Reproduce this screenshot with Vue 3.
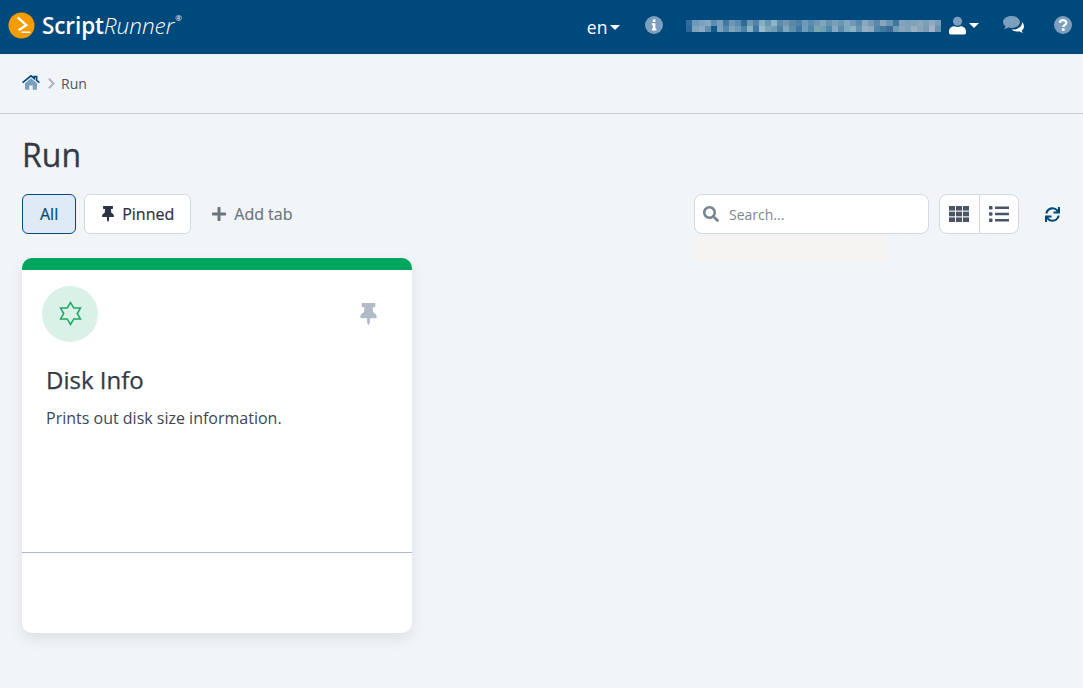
<script setup>
const pins = "M298.028 214.267L285.793 96H328c13.255 0 24-10.745 24-24V24c0-13.255-10.745-24-24-24H56C42.745 0 32 10.745 32 24v48c0 13.255 10.745 24 24 24h42.207L85.972 214.267C37.465 236.82 0 277.261 0 328c0 13.255 10.745 24 24 24h136v104.007c0 1.242.289 2.467.845 3.578l24 48c2.941 5.882 11.364 5.893 14.311 0l24-48a8.008 8.008 0 0 0 .845-3.578V352h136c13.255 0 24-10.745 24-24-.001-51.183-37.983-91.42-85.973-113.733z"
const top = ['#2f6d9c','#6f99b8','#7ea2bd','#86a7c0','#5f8db0','#7a9fbb','#3f7aa3','#6e97b6','#5a8bae','#2e6b99','#6c9ab5','#4f84a8','#86b0c2','#6a96b5','#8fb5c5','#5e8aab','#6f98b6','#5b8aa8','#4d82a8','#6f9ab7','#5c8cae','#6f99b3','#7fa5bb','#6993b1','#7aa0b8','#6c96b4','#85a7bd','#6e98b5','#5d8aac','#8aa8c0','#7799b5','#5c88aa','#8aa4bb','#6b94b2','#3f75a0','#83a3bb','#7ca0b9','#80a3bb','#8aa6bd','#7e9fb8','#90aabf','#7d9db8']
const bottom = ['#2a6796','#7ea4be','#8bacc4','#5f8eb0','#0f5a90','#7ba1bc','#5588ac','#7da3bd','#6c98b6','#4b82a8','#8ab2c4','#3c78a2','#98bdca','#7aa3bc','#6f9fb8','#4f7fa3','#7ea6bf','#5c90ad','#3d79a4','#6f9cb6','#4f86ab','#7aa8a8','#6f9fb5','#4f88ad','#86a9bd','#5a8cad','#7aa9c0','#8eb2c6','#6791b0','#96adc6','#8fa9c2','#4f86ad','#3f7a9c','#3b6b96','#6f9ab5','#86a6bc','#7fa2b9','#99b0c4','#8aa5bb','#7a9bb6','#a0b4c6','#6a90b0']
</script>

<template>
  <div class="page">
    <header class="topbar">
      <div class="brand">
        <svg class="logo" viewBox="0 0 28 28">
          <circle cx="14" cy="14" r="13.5" fill="#f59c00" />
          <path d="M10 5.500L19 13.500L11 19" fill="none" stroke="#fff" stroke-width="2.400" />
          <path d="M14 21H23" stroke="#fff" stroke-width="1.600" />
        </svg>
        <span class="word-a">Script</span><span class="word-b">Runner</span><span class="reg">®</span>
      </div>
      <nav class="topnav">
        <span class="lang">en<i class="caret"></i></span>
        <svg class="info" viewBox="0 0 18 18">
          <circle cx="9" cy="9" r="9" fill="#7d9fbe" />
          <rect x="7.800" y="3.500" width="2.600" height="2.500" fill="#fff" />
          <path d="M6.800 7.300h3.600v5.500h1v1.600H6.800v-1.600h1v-3.900h-1z" fill="#fff" />
        </svg>
        <div class="mosaic">
          <div class="mrow">
            <span v-for="(c, i) in top" :key="'t' + i" class="cell" :style="{ background: c }"></span>
          </div>
          <div class="mrow">
            <span v-for="(c, i) in bottom" :key="'b' + i" class="cell" :style="{ background: c }"></span>
          </div>
        </div>
        <span class="user">
          <svg class="user-ic" viewBox="0 0 18 19">
            <circle cx="9" cy="5" r="4.800" fill="#7d9fbe" />
            <path d="M5.500 10.300c2.200 1 4.800 1 7 0 3.200 0 5.500 2.600 5.500 5.600v1.300c0 1-.8 1.800-1.800 1.800H1.800C.8 19 0 18.200 0 17.200v-1.300c0-3 2.300-5.600 5.500-5.600z" fill="#fff" />
          </svg>
          <i class="caret"></i>
        </span>
        <svg class="comments" viewBox="0 0 23 18">
          <path d="M8.500 0C3.800 0 0 2.700 0 6c0 1.700 1 3.200 2.600 4.300C2.300 11.400 1.500 12.400 1 13c1.700-.2 3.300-.9 4.400-1.500 1 .3 2 .5 3.100.5 4.700 0 8.500-2.700 8.500-6s-3.800-6-8.500-6z" fill="#7d9fbe" />
          <path d="M18.500 5.500c.3.500.5 1 .5 1.600 0 3.700-4.400 6.500-9.500 6.500h-1c1.300 1.300 3.300 2 5.500 2 .8 0 1.500-.1 2.200-.3 1 .7 2.300 1.300 3.800 1.500-.5-.6-1-1.500-1.300-2.400 1.400-.9 2.300-2.200 2.300-3.700 0-2.200-1-3.700-2.500-5.200z" fill="#fff" />
        </svg>
        <svg class="help" viewBox="0 0 18 18">
          <circle cx="9" cy="9" r="9" fill="#7d9fbe" />
          <path d="M5.800 6.800C6 5 7.400 4.200 9.100 4.200c1.800 0 3.200 1 3.200 2.600 0 2.300-3 2.300-3 4.200" fill="none" stroke="#fff" stroke-width="2.200" />
          <rect x="7.900" y="12.300" width="2.700" height="2.500" fill="#fff" />
        </svg>
      </nav>
    </header>

    <div class="crumbs">
      <svg class="home" viewBox="0 0 18 15">
        <path d="M3 8.200L9 3.300l6 4.900V14a.8.8 0 0 1-.8.800h-3.500v-4.300H7.300v4.300H3.800A.8.800 0 0 1 3 14z" fill="#7d9fbe" />
        <path d="M0.600 7.600L9 .8l3.200 2.600V1.600h2.400v3.800l2.800 2.200" fill="none" stroke="#00497c" stroke-width="1.700" />
      </svg>
      <svg class="chev" viewBox="0 0 7 11"><path d="M1 .8L5.500 5.500 1 10.200" fill="none" stroke="#adb5bd" stroke-width="2" /></svg>
      <span class="crumb">Run</span>
    </div>

    <main class="content">
      <h1 class="title">Run</h1>

      <div class="toolbar">
        <div class="tabs">
          <button class="tab active">All</button>
          <button class="tab">
            <svg class="pin-ic" viewBox="0 0 384 512"><path :d="pins" fill="#2b3440" /></svg>
            Pinned
          </button>
          <button class="addtab">
            <svg class="plus-ic" viewBox="0 0 448 512"><path d="M416 208H272V64c0-17.670-14.330-32-32-32h-32c-17.670 0-32 14.330-32 32v144H32c-17.670 0-32 14.330-32 32v32c0 17.670 14.330 32 32 32h144v144c0 17.670 14.330 32 32 32h32c17.670 0 32-14.330 32-32V304h144c17.670 0 32-14.330 32-32v-32c0-17.670-14.330-32-32-32z" fill="#6c757d" /></svg>
            Add tab
          </button>
        </div>
        <div class="tools">
          <div class="searchbox">
            <svg class="search-ic" viewBox="0 0 512 512"><path d="M505 442.700L405.300 343c-4.500-4.500-10.600-7-17-7H372c27.600-35.300 44-79.700 44-128C416 93.100 322.900 0 208 0S0 93.100 0 208s93.100 208 208 208c48.300 0 92.700-16.400 128-44v16.300c0 6.400 2.500 12.500 7 17l99.700 99.700c9.400 9.400 24.600 9.400 33.900 0l28.300-28.300c9.400-9.400 9.400-24.600.1-34zM208 336c-70.700 0-128-57.200-128-128 0-70.700 57.200-128 128-128 70.700 0 128 57.200 128 128 0 70.700-57.200 128-128 128z" fill="#7a8491" /></svg>
            <span class="placeholder">Search...</span>
            <div class="ghost"></div>
          </div>
          <div class="viewgroup">
            <button class="viewbtn">
              <svg class="view-ic" viewBox="0 0 20 16">
                <g fill="#4a5568">
                  <rect x="0" y="0" width="6" height="4.600" /><rect x="7" y="0" width="6" height="4.600" /><rect x="14" y="0" width="6" height="4.600" />
                  <rect x="0" y="5.700" width="6" height="4.600" /><rect x="7" y="5.700" width="6" height="4.600" /><rect x="14" y="5.700" width="6" height="4.600" />
                  <rect x="0" y="11.400" width="6" height="4.600" /><rect x="7" y="11.400" width="6" height="4.600" /><rect x="14" y="11.400" width="6" height="4.600" />
                </g>
              </svg>
            </button>
            <button class="viewbtn">
              <svg class="view-ic" viewBox="0 0 20 16">
                <g fill="#4a5568">
                  <rect x="0" y="0" width="3.500" height="3.500" rx=".8" /><rect x="6" y="0.500" width="14" height="2.500" />
                  <rect x="0" y="6.250" width="3.500" height="3.500" rx=".8" /><rect x="6" y="6.750" width="14" height="2.500" />
                  <rect x="0" y="12.500" width="3.500" height="3.500" rx=".8" /><rect x="6" y="13" width="14" height="2.500" />
                </g>
              </svg>
            </button>
          </div>
          <svg class="sync-ic" viewBox="0 0 512 512"><path d="M440.650 12.570l4 82.770A247.160 247.160 0 0 0 255.830 8C134.730 8 33.910 94.920 12.290 209.820A12 12 0 0 0 24.090 224h49.050a12 12 0 0 0 11.670-9.260 175.910 175.910 0 0 1 317-56.940l-101.460-4.860a12 12 0 0 0-12.570 12v47.410a12 12 0 0 0 12 12H500a12 12 0 0 0 12-12V12a12 12 0 0 0-12-12h-47.370a12 12 0 0 0-11.980 12.570zM255.830 432a175.610 175.610 0 0 1-146-77.800l101.800 4.870a12 12 0 0 0 12.570-12v-47.400a12 12 0 0 0-12-12H12a12 12 0 0 0-12 12V500a12 12 0 0 0 12 12h47.350a12 12 0 0 0 12-12.600l-4.150-82.570A247.170 247.170 0 0 0 255.830 504c121.110 0 221.930-86.920 243.550-201.820a12 12 0 0 0-11.800-14.180h-49.050a12 12 0 0 0-11.670 9.260A175.860 175.860 0 0 1 255.830 432z" fill="#00497c" /></svg>
        </div>
      </div>

      <article class="card">
        <div class="card-body">
          <div class="card-top">
            <div class="badge">
              <svg class="star" viewBox="0 0 24 24">
                <path d="M12 1.500L15.200 6.800H21.500L18.500 12L21.500 17.200H15.200L12 22.500L8.800 17.200H2.500L5.500 12L2.500 6.800H8.800Z" fill="none" stroke="#1fa866" stroke-width="1.500" stroke-linejoin="miter" />
              </svg>
            </div>
            <svg class="card-pin" viewBox="0 0 384 512"><path :d="pins" fill="#b2b9c8" /></svg>
          </div>
          <h2 class="card-title">Disk Info</h2>
          <p class="card-text">Prints out disk size information.</p>
        </div>
        <div class="card-foot"></div>
      </article>
    </main>
  </div>
</template>

<style scoped>
.page { width: 1083px; height: 688px; overflow: hidden; background: #f2f5f8; font-family: "Open Sans", sans-serif; color: #333a45; }
.topbar { height: 54px; background: #00497c; display: flex; align-items: center; justify-content: space-between; padding: 0 11px 0 8px; box-sizing: border-box; }
.brand { display: flex; align-items: center; color: #fff; position: relative; margin-bottom: 4px; }
.logo { width: 27px; height: 27px; margin-right: 7px; }
.word-a { font-size: 22.500px; font-weight: 600; letter-spacing: -0.1px; }
.word-b { font-size: 22.500px; font-weight: 300; font-style: italic; }
.reg { font-size: 8px; align-self: flex-start; margin-left: 1px; margin-top: 2px; }
.topnav { display: flex; align-items: center; color: #fff; }
.lang { font-size: 17.500px; display: flex; align-items: center; margin-right: 25px; }
.caret { display: inline-block; width: 0; height: 0; border-left: 5px solid transparent; border-right: 5px solid transparent; border-top: 5px solid #fff; margin-left: 3px; }
.info { width: 18px; height: 18px; margin-right: 23px; margin-bottom: 4px; }
.mosaic { display: flex; flex-direction: column; margin-right: 8px; margin-bottom: 2px; }
.mrow { display: flex; }
.cell { width: 6.070px; height: 6px; display: block; }
.user { display: flex; align-items: center; margin-right: 24px; margin-bottom: 4px; }
.user-ic { width: 17px; height: 19px; }
.user .caret { margin-left: 3px; }
.comments { width: 23px; height: 18px; margin-right: 28px; margin-bottom: 4px; }
.help { width: 18px; height: 18px; margin-bottom: 4px; }
.crumbs { height: 59px; border-bottom: 1px solid #c6ccd4; padding-left: 22px; display: flex; align-items: center; gap: 7px; box-sizing: content-box; }
.home { width: 18px; height: 15px; margin-top: -3px; }
.chev { width: 7px; height: 11px; margin-left: 1px; margin-right: -1px; }
.crumb { font-size: 14px; color: #4a5462; }
.content { padding: 0 22px; }
.title { margin: 19px 0 17px; font-size: 32px; line-height: 44px; font-weight: 500; color: #333a45; -webkit-text-stroke: 0.3px #333a45; }
.toolbar { display: flex; justify-content: space-between; align-items: center; height: 40px; margin-bottom: 24px; }
.tabs { display: flex; align-items: center; gap: 8px; }
.tab { height: 40px; padding: 0 16px; box-sizing: border-box; background: #fff; border: 1px solid #d3d9e2; border-radius: 6px; font: 500 16px "Open Sans", sans-serif; color: #2b3440; display: flex; align-items: center; gap: 7px; -webkit-text-stroke: 0.2px currentColor; }
.tab.active { background: #dfeaf4; border-color: #00497c; color: #00497c; padding: 0 17px; }
.pin-ic { width: 14px; height: 16px; }
.addtab { height: 40px; border: 0; background: none; padding: 0 0 0 13px; font: 500 16px "Open Sans", sans-serif; color: #6c757d; display: flex; align-items: center; gap: 8px; -webkit-text-stroke: 0.2px currentColor; }
.plus-ic { width: 14px; height: 16px; }
.tools { display: flex; align-items: center; }
.searchbox { width: 235px; height: 40px; box-sizing: border-box; background: #fff; border: 1px solid #d3d9e2; border-radius: 8px; display: flex; align-items: center; padding-left: 8px; gap: 10px; position: relative; margin-right: 10px; }
.search-ic { width: 16px; height: 16px; }
.placeholder { font-size: 14px; color: #7c8693; }
.ghost { position: absolute; left: -3px; top: 39px; width: 192px; height: 26px; background: #f5f4f3; }
.viewgroup { display: flex; width: 80px; height: 40px; box-sizing: border-box; background: #fff; border: 1px solid #d3d9e2; border-radius: 8px; margin-right: 26px; overflow: hidden; }
.viewbtn { flex: 1; border: 0; background: none; padding: 0; display: flex; align-items: center; justify-content: center; }
.viewbtn + .viewbtn { border-left: 1px solid #d3d9e2; }
.view-ic { width: 20px; height: 16px; }
.sync-ic { width: 15px; height: 15px; margin-right: 1px; }
.card { width: 390px; height: 375px; box-sizing: border-box; background: #fff; border-top: 12px solid #00a65d; border-radius: 10px; box-shadow: 0 6px 14px rgba(60, 80, 110, 0.12); display: flex; flex-direction: column; }
.card-body { height: 283px; box-sizing: border-box; padding: 16px 24px 0 20px; border-bottom: 1px solid #b0b8c8; flex: none; }
.card-top { display: flex; justify-content: space-between; align-items: center; }
.badge { width: 56px; height: 56px; border-radius: 50%; background: #d9f1e6; display: flex; align-items: center; justify-content: center; }
.star { width: 25px; height: 25px; margin-bottom: 2px; }
.card-pin { width: 17px; height: 22px; margin-right: 11px; }
.card-title { margin: 21px 0 0 4px; font-size: 24px; line-height: 34px; font-weight: 500; color: #333a45; -webkit-text-stroke: 0.25px #333a45; }
.card-text { margin: 9px 0 0 4px; font-size: 16px; line-height: 24px; color: #3e4756; }
.card-foot { flex: 1; }
</style>
